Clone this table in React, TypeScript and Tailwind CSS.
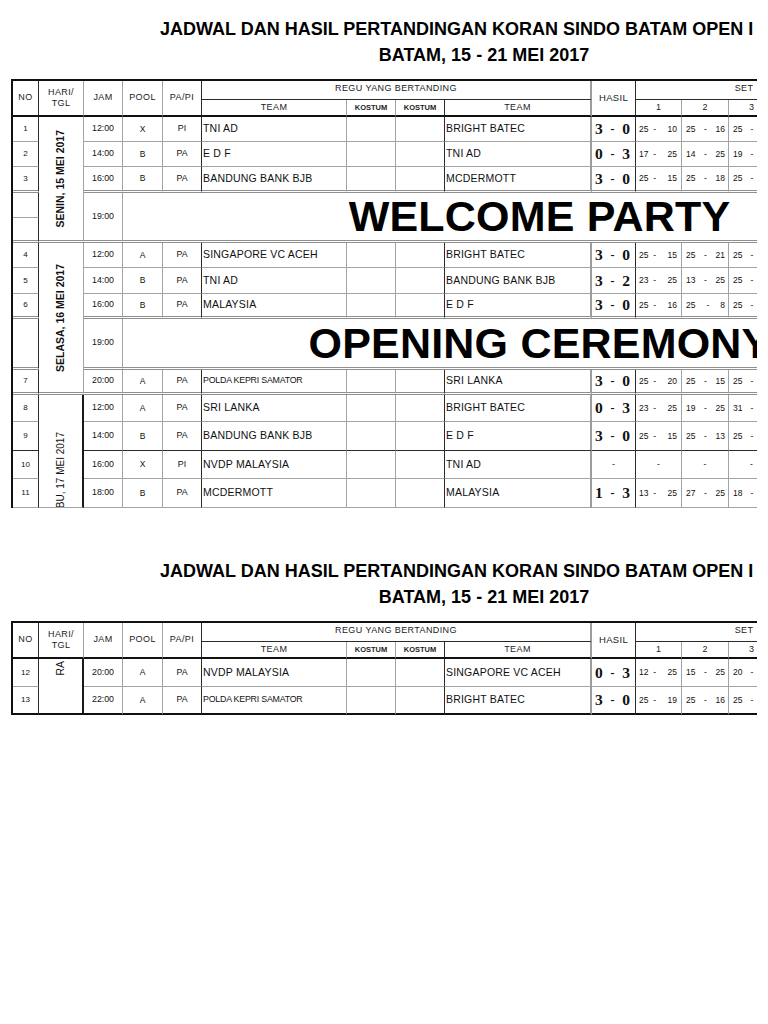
import type { ReactNode } from 'react'

type Pair = [string, string]

interface Match {
  no: number
  jam: string
  pool: string
  pa: string
  t1: string
  t2: string
  hasil: Pair | null
  sets: (Pair | null)[]
  narrow1?: boolean
}

const R: Record<string, string> = {
  g: 'border-r border-r-[#a3a3a3]',
  g2: 'border-r-2 border-r-[#9c9c9c]',
  k: 'border-r border-r-[#2a2a2a]',
  k2: 'border-r-2 border-r-[#1a1a1a]',
  none: '',
}

const B: Record<string, string> = {
  g: 'border-b border-b-[#a3a3a3]',
  k: 'border-b border-b-[#2a2a2a]',
  k2: 'border-b-2 border-b-[#111]',
  dbl: 'border-b-[3px] border-double border-b-[#8f8f8f]',
  none: '',
}

const J: Record<string, string> = {
  center: 'justify-center',
  start: 'justify-start',
  between: 'justify-between',
}

const A: Record<string, string> = {
  center: 'items-center',
  start: 'items-start',
  end: 'items-end',
}

const GRID_COLS =
  'grid grid-cols-[26px_45px_39px_40px_39px_145px_49px_49px_147px_44px_46px_47px_46px_46px_46px_90px]'

function Cell({
  r = 'g',
  b = 'g',
  j = 'center',
  a = 'center',
  className = '',
  children,
}: {
  r?: string
  b?: string
  j?: string
  a?: string
  className?: string
  children?: ReactNode
}) {
  return (
    <div className={`flex overflow-hidden whitespace-nowrap ${J[j]} ${A[a]} ${R[r]} ${B[b]} ${className}`}>
      {children}
    </div>
  )
}

const page1: Match[] = [
  { no: 1, jam: '12:00', pool: 'X', pa: 'PI', t1: 'TNI AD', t2: 'BRIGHT BATEC', hasil: ['3', '0'], sets: [['25', '10'], ['25', '16'], ['25', '21']] },
  { no: 2, jam: '14:00', pool: 'B', pa: 'PA', t1: 'E D F', t2: 'TNI AD', hasil: ['0', '3'], sets: [['17', '25'], ['14', '25'], ['19', '25']] },
  { no: 3, jam: '16:00', pool: 'B', pa: 'PA', t1: 'BANDUNG BANK BJB', t2: 'MCDERMOTT', hasil: ['3', '0'], sets: [['25', '15'], ['25', '18'], ['25', '20']] },
  { no: 4, jam: '12:00', pool: 'A', pa: 'PA', t1: 'SINGAPORE VC ACEH', t2: 'BRIGHT BATEC', hasil: ['3', '0'], sets: [['25', '15'], ['25', '21'], ['25', '19']] },
  { no: 5, jam: '14:00', pool: 'B', pa: 'PA', t1: 'TNI AD', t2: 'BANDUNG BANK BJB', hasil: ['3', '2'], sets: [['23', '25'], ['13', '25'], ['25', '22']] },
  { no: 6, jam: '16:00', pool: 'B', pa: 'PA', t1: 'MALAYSIA', t2: 'E D F', hasil: ['3', '0'], sets: [['25', '16'], ['25', '8'], ['25', '14']] },
  { no: 7, jam: '20:00', pool: 'A', pa: 'PA', t1: 'POLDA KEPRI SAMATOR', t2: 'SRI LANKA', hasil: ['3', '0'], sets: [['25', '20'], ['25', '15'], ['25', '17']], narrow1: true },
  { no: 8, jam: '12:00', pool: 'A', pa: 'PA', t1: 'SRI LANKA', t2: 'BRIGHT BATEC', hasil: ['0', '3'], sets: [['23', '25'], ['19', '25'], ['31', '33']] },
  { no: 9, jam: '14:00', pool: 'B', pa: 'PA', t1: 'BANDUNG BANK BJB', t2: 'E D F', hasil: ['3', '0'], sets: [['25', '15'], ['25', '13'], ['25', '18']] },
  { no: 10, jam: '16:00', pool: 'X', pa: 'PI', t1: 'NVDP MALAYSIA', t2: 'TNI AD', hasil: null, sets: [null, null, null] },
  { no: 11, jam: '18:00', pool: 'B', pa: 'PA', t1: 'MCDERMOTT', t2: 'MALAYSIA', hasil: ['1', '3'], sets: [['13', '25'], ['27', '25'], ['18', '25']] },
]

const page2: Match[] = [
  { no: 12, jam: '20:00', pool: 'A', pa: 'PA', t1: 'NVDP MALAYSIA', t2: 'SINGAPORE VC ACEH', hasil: ['0', '3'], sets: [['12', '25'], ['15', '25'], ['20', '25']] },
  { no: 13, jam: '22:00', pool: 'A', pa: 'PA', t1: 'POLDA KEPRI SAMATOR', t2: 'BRIGHT BATEC', hasil: ['3', '0'], sets: [['25', '19'], ['25', '16'], ['25', '21']], narrow1: true },
]

function Title() {
  return (
    <div className="ml-[11px] w-[946px] flex flex-col gap-[8px] text-[18px] leading-[18px] font-bold text-black whitespace-nowrap">
      <div className="pl-[149px]">JADWAL DAN HASIL PERTANDINGAN KORAN SINDO BATAM OPEN I 2017</div>
      <div className="text-center">BATAM, 15 - 21 MEI 2017</div>
    </div>
  )
}

function Header() {
  const hd = 'text-[9px] tracking-[0.4px] text-[#222]'
  return (
    <>
      <Cell r="k" b="k2" className={`row-span-2 ${hd}`}>NO</Cell>
      <Cell r="g" b="k2" className={`row-span-2 flex-col leading-[11px] ${hd}`}>
        <span>HARI/</span>
        <span>TGL</span>
      </Cell>
      <Cell b="k2" className={`row-span-2 ${hd}`}>JAM</Cell>
      <Cell b="k2" className={`row-span-2 ${hd}`}>POOL</Cell>
      <Cell r="k" b="k2" className={`row-span-2 ${hd}`}>PA/PI</Cell>
      <Cell r="g2" b="k" className={`col-span-4 pb-[3px] ${hd}`}>REGU YANG BERTANDING</Cell>
      <Cell r="k" b="k2" className="row-span-2 text-[9.5px] tracking-[0.3px] text-[#222]">HASIL</Cell>
      <Cell r="g" b="k" className={`col-span-5 pb-[2px] pr-[14px] ${hd}`}>SET</Cell>
      <Cell b="k2" className={`row-span-2 ${hd}`}>KET</Cell>

      <Cell b="k2" className={hd}>TEAM</Cell>
      <Cell b="k2" className="text-[7.5px] font-bold text-[#222]">KOSTUM</Cell>
      <Cell r="k" b="k2" className="text-[7.5px] font-bold text-[#222]">KOSTUM</Cell>
      <Cell r="g2" b="k2" className={hd}>TEAM</Cell>
      {['1', '2', '3', '4', '5'].map((s) => (
        <Cell key={s} b="k2" className="text-[9px] text-[#222]">
          {s}
        </Cell>
      ))}
    </>
  )
}

function SetCell({ s, first, b }: { s: Pair | null | undefined; first: boolean; b: string }) {
  if (s === null) {
    return <Cell b={b} className="text-[8.5px]">-</Cell>
  }
  if (!s) return <Cell b={b} />
  if (first) {
    return (
      <Cell b={b} j="between" className="pl-[3px] pr-[4px] text-[8.5px]">
        <span>{s[0]}&nbsp;&nbsp;-</span>
        <span>{s[1]}</span>
      </Cell>
    )
  }
  return (
    <Cell b={b} j="between" className="pl-[4px] pr-[3px] text-[8.5px]">
      <span>{s[0]}</span>
      <span>-</span>
      <span>{s[1]}</span>
    </Cell>
  )
}

function MatchRow({ m, b = 'g', day }: { m: Match; b?: string; day?: ReactNode }) {
  return (
    <>
      <Cell r="k" b={b} className="text-[8px]">{m.no}</Cell>
      {day}
      <Cell b={b} className="text-[8.8px]">{m.jam}</Cell>
      <Cell b={b} className="text-[8.5px]">{m.pool}</Cell>
      <Cell r="k" b={b} className="text-[8.8px]">{m.pa}</Cell>
      <Cell b={b} j="start" className={`pl-px ${m.narrow1 ? 'text-[8.8px] tracking-[-0.2px]' : 'text-[10.5px] tracking-[0.2px]'}`}>
        {m.t1}
      </Cell>
      <Cell b={b} />
      <Cell r="k" b={b} />
      <Cell r="g2" b={b} j="start" className="pl-px text-[10.5px] tracking-[0.2px]">{m.t2}</Cell>
      {m.hasil ? (
        <Cell r="k" b={b} j="between" className="pl-[3px] pr-[5px] font-['Liberation_Serif',serif] font-bold text-[15.5px]">
          <span>{m.hasil[0]}</span>
          <span className="text-[12px]">-</span>
          <span>{m.hasil[1]}</span>
        </Cell>
      ) : (
        <Cell r="k" b={b} className="text-[9px]">-</Cell>
      )}
      {[0, 1, 2, 3, 4].map((i) => (
        <SetCell key={i} s={i < 3 ? m.sets[i] : undefined} first={i === 0} b={b} />
      ))}
      <Cell b={b} />
    </>
  )
}

function DayLabel({ children }: { children: ReactNode }) {
  return (
    <span className="[writing-mode:vertical-rl] rotate-180 whitespace-nowrap text-[10.5px] font-bold">
      {children}
    </span>
  )
}

function Event({ label, splitNo }: { label: string; splitNo: boolean }) {
  return (
    <>
      {splitNo ? <Cell r="k" b="g" /> : <Cell r="k" b="dbl" className="row-span-2" />}
      <Cell b="dbl" className="row-span-2 text-[8.8px]">19:00</Cell>
      <Cell b="dbl" className="row-span-2 col-span-13 text-[43px] font-bold text-black tracking-[0.2px]">
        {label}
      </Cell>
      {splitNo && <Cell r="k" b="dbl" />}
    </>
  )
}

export default function App() {
  const m = page1
  return (
    <div className="w-[768px] h-[1024px] bg-white overflow-hidden font-['Liberation_Sans',Arial,sans-serif] text-[#111]">
      <div className="w-[757px] overflow-hidden pt-[20px]">
        <Title />
        <div
          className={`${GRID_COLS} grid-rows-[19px_17px_25px_25px_26px_25px_25px_25px_26px_25px_25px_26px_25px_27px_29px_28px_29px] mt-[15px] ml-[11px] w-[946px] border-t-2 border-l-2 border-t-[#111] border-l-[#111] h-[429px] overflow-hidden`}
        >
          <Header />
          <MatchRow
            m={m[0]}
            day={
              <Cell b="dbl" className="row-span-5">
                <DayLabel>SENIN, 15 MEI 2017</DayLabel>
              </Cell>
            }
          />
          <MatchRow m={m[1]} />
          <MatchRow m={m[2]} b="dbl" />
          <Event label="WELCOME PARTY" splitNo />
          <MatchRow
            m={m[3]}
            day={
              <Cell b="dbl" className="row-span-6">
                <DayLabel>SELASA, 16 MEI 2017</DayLabel>
              </Cell>
            }
          />
          <MatchRow m={m[4]} />
          <MatchRow m={m[5]} b="dbl" />
          <Event label="OPENING CEREMONY" splitNo={false} />
          <MatchRow m={m[6]} b="dbl" />
          <MatchRow
            m={m[7]}
            day={
              <Cell r="k2" b="g" a="end" className="row-span-4">
                <span className="[writing-mode:vertical-rl] rotate-180 whitespace-nowrap text-[10px] mb-[-15px]">
                  RABU, 17 MEI 2017
                </span>
              </Cell>
            }
          />
          <MatchRow m={m[8]} b="k" />
          <MatchRow m={m[9]} />
          <MatchRow m={m[10]} />
        </div>

        <div className="mt-[54px]">
          <Title />
        </div>
        <div
          className={`${GRID_COLS} grid-rows-[19px_17px_28px_28px] mt-[15px] ml-[11px] w-[946px] border-t-2 border-l-2 border-t-[#111] border-l-[#111]`}
        >
          <Header />
          <MatchRow
            m={page2[0]}
            b="g"
            day={
              <Cell r="k2" b="k2" a="start" className="row-span-2 pt-[2px]">
                <span className="[writing-mode:vertical-rl] rotate-180 whitespace-nowrap text-[10.5px]">RA</span>
              </Cell>
            }
          />
          <MatchRow m={page2[1]} b="k2" />
        </div>
      </div>
    </div>
  )
}
